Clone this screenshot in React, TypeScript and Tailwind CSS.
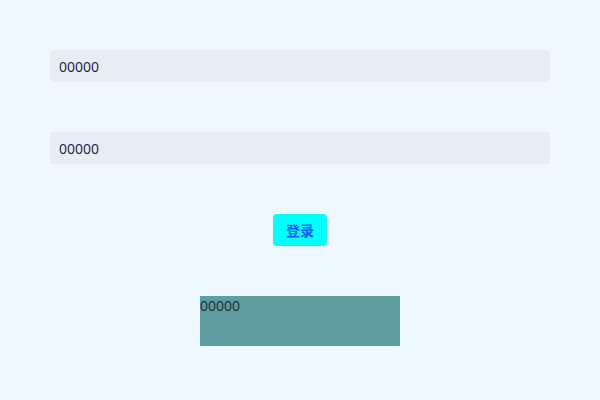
const App = () => {
  return (
    <div
      className="w-full min-h-screen bg-[#f0f8ff] px-[50px] pt-[50px] flex flex-col items-center gap-[50px] text-[14px]"
      style={{ fontFamily: '"Noto Sans", "Noto Sans CJK SC", sans-serif' }}
    >
      <input
        className="w-full h-8 px-[9px] rounded bg-[#e6edf5] text-[#1f2a44] outline-none"
        type="text"
        defaultValue="00000"
      />
      <input
        className="w-full h-8 px-[9px] rounded bg-[#e6edf5] text-[#1f2a44] outline-none"
        type="text"
        defaultValue="00000"
      />
      <button
        className="w-[54px] h-8 rounded bg-[#00ffff] text-[#1a5cff] font-semibold"
        type="button"
      >
        登录
      </button>
      <div className="w-[200px] h-[50px] bg-[#5f9ea0] text-[#1f2a33] leading-[19px]">
        00000
      </div>
    </div>
  );
};

export default App;
